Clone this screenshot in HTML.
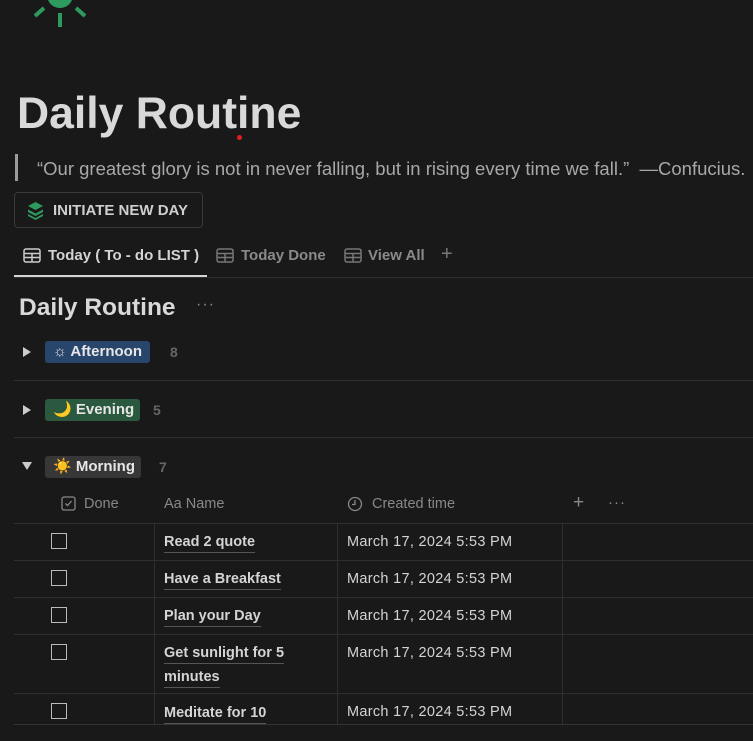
<!DOCTYPE html>
<html><head><meta charset="utf-8"><style>
body{margin:0;width:753px;height:741px;background:#191919;overflow:hidden;font-family:"Liberation Sans",sans-serif;color:#d4d4d4;position:relative}
.a{position:absolute;white-space:nowrap}
.hl{position:absolute;height:1px;background:#2f2f2f}
.vl{position:absolute;width:1px;background:#2f2f2f}
.cb{position:absolute;left:51px;width:16px;height:16px;border:1.5px solid #bbb;box-sizing:border-box}
.nm{position:absolute;left:164px;font-size:14.5px;font-weight:bold;color:#d4d4d4;border-bottom:1px solid #555;line-height:19px}
.dt{position:absolute;left:347px;font-size:14.5px;color:#d4d4d4;letter-spacing:0.3px}
.tag{position:absolute;left:45px;height:22px;border-radius:3px;font-size:15px;font-weight:bold;line-height:22px;padding:0 6px 0 8px;color:#e6e6e6}
.cnt{position:absolute;font-size:14px;font-weight:bold;color:#666}
.tri{position:absolute;left:23px;width:0;height:0}
</style></head><body>
<svg class="a" style="left:30px;top:0" width="60" height="30" viewBox="0 0 60 30"><circle cx="30" cy="-5" r="13" fill="#2e9a5e"/><g stroke="#2e9a5e" stroke-width="4"><line x1="30" y1="13" x2="30" y2="27"/><line x1="5" y1="16" x2="14" y2="8"/><line x1="55" y1="16" x2="46" y2="8"/></g></svg>
<div class="a" style="left:17px;top:89px;font-size:44.5px;font-weight:bold;color:#d9d9d9">Daily Routine</div>
<div class="a" style="left:237px;top:135px;width:5px;height:5px;border-radius:50%;background:#e02020"></div>
<div class="a" style="left:15px;top:154px;width:3px;height:27px;background:#9b9b9b"></div>
<div class="a" style="left:37px;top:158px;font-size:18.5px;color:#a8a8a8">“Our greatest glory is not in never falling, but in rising every time we fall.”&nbsp; —Confucius.</div>
<div class="a" style="left:14px;top:192px;width:189px;height:36px;border:1px solid #3a3a3a;border-radius:4px;box-sizing:border-box"></div>
<svg class="a" style="left:27px;top:201px" width="17" height="19" viewBox="0 0 17 19"><g fill="#2e9a5e"><path d="M8.5 1L16 5 8.5 9 1 5z"/><path d="M1 8.5l7.5 4 7.5-4v2.5l-7.5 4-7.5-4z"/><path d="M1 13l7.5 4 7.5-4v2l-7.5 4-7.5-4z"/></g></svg>
<div class="a" style="left:53px;top:202px;font-size:15px;font-weight:bold;color:#cfcfcf">INITIATE NEW DAY</div>
<svg class="a" style="left:23px;top:248px" width="18" height="16" viewBox="0 0 18 16"><rect x="1" y="1" width="16" height="13" rx="2" fill="none" stroke="#ccc" stroke-width="1.5"/><path d="M1 5.5h16M1 9.5h16M9 5.5v8.5" stroke="#ccc" stroke-width="1.5"/></svg>
<div class="a" style="left:48px;top:247px;font-size:15px;font-weight:bold;color:#d4d4d4">Today ( To - do LIST )</div>
<svg class="a" style="left:216px;top:248px" width="18" height="16" viewBox="0 0 18 16"><rect x="1" y="1" width="16" height="13" rx="2" fill="none" stroke="#777" stroke-width="1.5"/><path d="M1 5.5h16M1 9.5h16M9 5.5v8.5" stroke="#777" stroke-width="1.5"/></svg>
<div class="a" style="left:241px;top:247px;font-size:15px;font-weight:bold;color:#8a8a8a">Today Done</div>
<svg class="a" style="left:344px;top:248px" width="18" height="16" viewBox="0 0 18 16"><rect x="1" y="1" width="16" height="13" rx="2" fill="none" stroke="#777" stroke-width="1.5"/><path d="M1 5.5h16M1 9.5h16M9 5.5v8.5" stroke="#777" stroke-width="1.5"/></svg>
<div class="a" style="left:368px;top:247px;font-size:15px;font-weight:bold;color:#8a8a8a">View All</div>
<div class="a" style="left:441px;top:243px;font-size:20px;color:#777">+</div>
<div class="hl" style="left:14px;right:0;top:277px"></div>
<div class="a" style="left:14px;top:275px;width:193px;height:2px;background:#d4d4d4"></div>
<div class="a" style="left:19px;top:294px;font-size:24.5px;font-weight:bold;color:#d9d9d9">Daily Routine</div>
<div class="a" style="left:196px;top:296px;font-size:16px;color:#888;letter-spacing:1px">···</div>
<div class="tri" style="top:347px;border-left:8px solid #ccc;border-top:5px solid transparent;border-bottom:5px solid transparent"></div>
<div class="tag" style="top:341px;background:#28456c;padding-right:8px">☼ Afternoon</div>
<div class="cnt" style="left:170px;top:344px">8</div>
<div class="hl" style="left:14px;right:0;top:380px"></div>
<div class="tri" style="top:405px;border-left:8px solid #ccc;border-top:5px solid transparent;border-bottom:5px solid transparent"></div>
<div class="tag" style="top:399px;background:#2b593f">🌙 Evening</div>
<div class="cnt" style="left:153px;top:402px">5</div>
<div class="hl" style="left:14px;right:0;top:437px"></div>
<div class="tri" style="top:462px;left:22px;border-top:8px solid #ccc;border-left:5px solid transparent;border-right:5px solid transparent"></div>
<div class="tag" style="top:456px;background:#373737">☀️ Morning</div>
<div class="cnt" style="left:159px;top:459px">7</div>
<svg class="a" style="left:61px;top:496px" width="15" height="15"><rect x="1" y="1" width="13" height="13" rx="2" fill="none" stroke="#888" stroke-width="1.3"/><path d="M4.5 7.5l2 2 4-4.5" stroke="#888" stroke-width="1.3" fill="none"/></svg>
<div class="a" style="left:84px;top:496px;font-size:14.5px;color:#888">Done</div>
<div class="a" style="left:164px;top:496px;font-size:14.5px;color:#888">Aa Name</div>
<svg class="a" style="left:347px;top:496px" width="16" height="16"><circle cx="8" cy="8" r="6.5" fill="none" stroke="#888" stroke-width="1.3"/><path d="M8 4v4.5H5" stroke="#888" stroke-width="1.3" fill="none"/></svg>
<div class="a" style="left:372px;top:496px;font-size:14.5px;color:#888">Created time</div>
<div class="a" style="left:573px;top:492px;font-size:19px;color:#888">+</div>
<div class="a" style="left:608px;top:494px;font-size:15px;color:#888;letter-spacing:1px">···</div>
<div class="hl" style="left:14px;right:0;top:523px"></div>
<div class="hl" style="left:14px;right:0;top:560px"></div>
<div class="hl" style="left:14px;right:0;top:597px"></div>
<div class="hl" style="left:14px;right:0;top:634px"></div>
<div class="hl" style="left:14px;right:0;top:693px"></div>
<div class="hl" style="left:14px;right:0;top:724px;background:#333"></div>
<div class="vl" style="left:154px;top:523px;height:201px"></div>
<div class="vl" style="left:337px;top:523px;height:201px"></div>
<div class="vl" style="left:562px;top:523px;height:201px"></div>
<div class="cb" style="top:533px"></div><div class="nm" style="top:533px">Read 2 quote</div><div class="dt" style="top:534px">March 17, 2024 5:53 PM</div>
<div class="cb" style="top:570px"></div><div class="nm" style="top:570px">Have a Breakfast</div><div class="dt" style="top:571px">March 17, 2024 5:53 PM</div>
<div class="cb" style="top:607px"></div><div class="nm" style="top:607px">Plan your Day</div><div class="dt" style="top:608px">March 17, 2024 5:53 PM</div>
<div class="cb" style="top:644px"></div><div class="nm" style="top:644px">Get sunlight for 5</div><div class="nm" style="top:668px">minutes</div><div class="dt" style="top:645px">March 17, 2024 5:53 PM</div>
<div class="cb" style="top:703px"></div><div class="nm" style="top:704px">Meditate for 10</div><div class="dt" style="top:704px">March 17, 2024 5:53 PM</div>
</body></html>
